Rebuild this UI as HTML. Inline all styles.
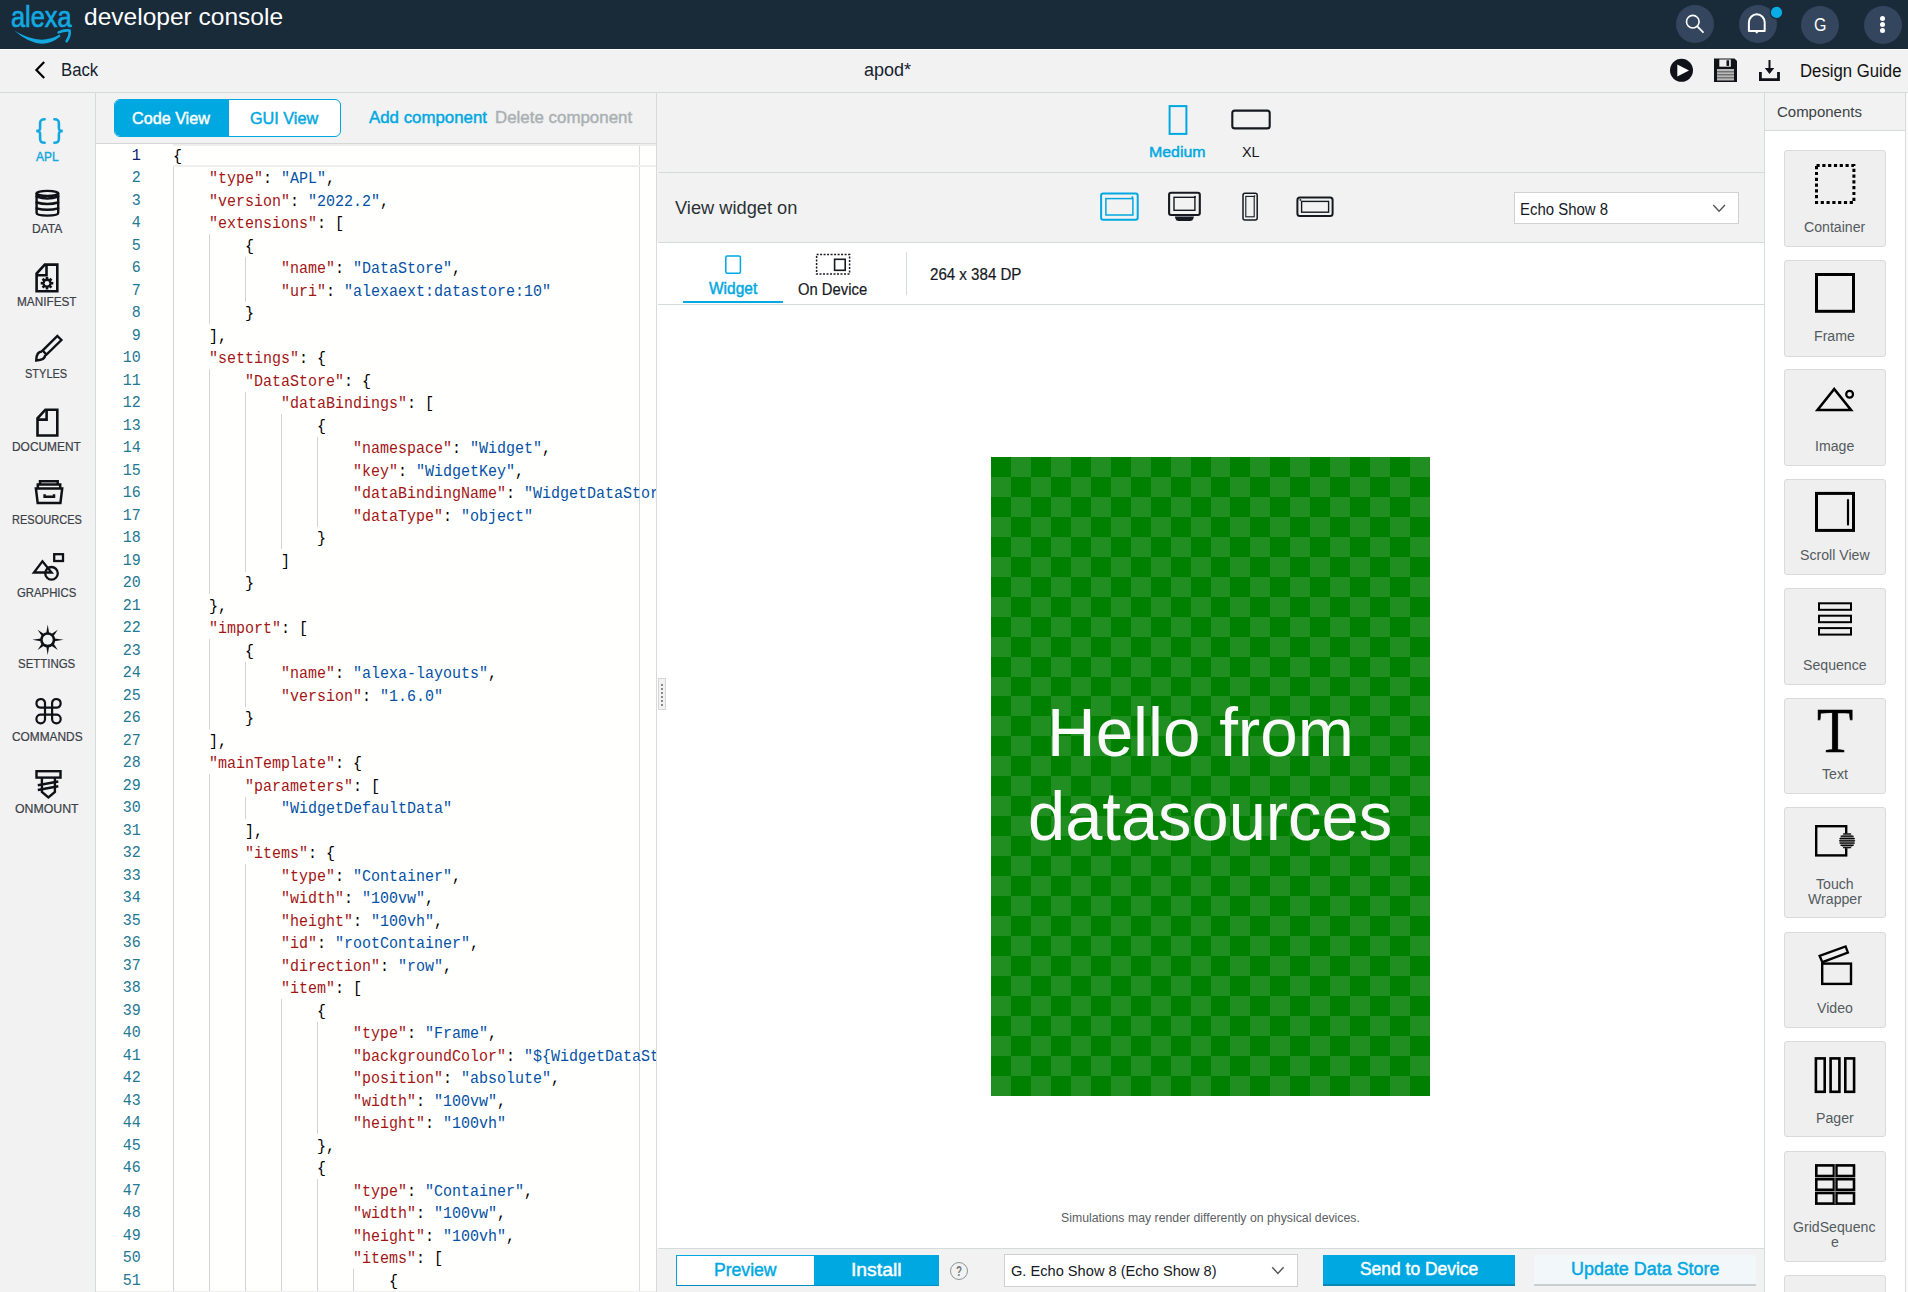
<!DOCTYPE html>
<html><head><meta charset="utf-8">
<style>
*{box-sizing:border-box;margin:0;padding:0}
html,body{width:1908px;height:1292px;overflow:hidden;background:#fff;font-family:"Liberation Sans",sans-serif;position:relative}
.a{position:absolute}
.t{position:absolute;white-space:pre;line-height:1}
svg{position:absolute;overflow:visible}
.ln{position:absolute;left:0;width:140px;text-align:right;font-family:"Liberation Mono",monospace;font-size:16.5px;transform:scaleX(0.909);transform-origin:100% 0;color:#237893;line-height:22.5px;height:22.5px}
.cl{position:absolute;left:173px;font-family:"Liberation Mono",monospace;font-size:16.5px;transform:scaleX(0.909);transform-origin:0 0;line-height:22.5px;height:22.5px;white-space:pre;color:#000}
.k{color:#a31515}.s{color:#0451a5}
.ig{position:absolute;width:1px;background:#d3d3d3}
.card{position:absolute;left:1784px;width:102px;background:#efefef;border:1px solid #dadada;border-radius:3px}
.cardl{position:absolute;left:1784px;width:102px;text-align:center;font-size:14.5px;color:#545b5e;line-height:1;white-space:pre}
</style></head><body>

<div class="a" style="left:0px;top:0px;width:1908px;height:49px;background:#192a39;"></div>
<div class="a" style="left:0px;top:49px;width:1908px;height:1px;background:#ffffff;"></div>
<div class="a" style="left:0px;top:50px;width:1908px;height:42px;background:#f2f2f2;"></div>
<div class="a" style="left:0px;top:92px;width:1908px;height:1px;background:#d5dbdb;"></div>
<div class="a" style="left:0px;top:93px;width:95px;height:1199px;background:#f2f2f2;"></div>
<div class="a" style="left:95px;top:93px;width:1px;height:1199px;background:#d5dbdb;"></div>
<div class="a" style="left:96px;top:93px;width:560px;height:50px;background:#f2f2f2;"></div>
<div class="a" style="left:96px;top:143px;width:560px;height:1px;background:#d6d6d6;"></div>
<div class="a" style="left:96px;top:144px;width:560px;height:1148px;background:#fffffe;"></div>
<div class="a" style="left:639px;top:144px;width:1px;height:1148px;background:#dcdcdc;"></div>
<div class="a" style="left:640px;top:143px;width:16px;height:2px;background:#dcdcdc;"></div>
<div class="a" style="left:656px;top:93px;width:1px;height:1199px;background:#d9d9d9;"></div>
<div class="a" style="left:657px;top:93px;width:1107px;height:79px;background:#f2f2f2;"></div>
<div class="a" style="left:658px;top:172px;width:1106px;height:1px;background:#d5dbdb;"></div>
<div class="a" style="left:657px;top:173px;width:1107px;height:69px;background:#f2f2f2;"></div>
<div class="a" style="left:658px;top:242px;width:1106px;height:1px;background:#d5dbdb;"></div>
<div class="a" style="left:657px;top:243px;width:1107px;height:61px;background:#ffffff;"></div>
<div class="a" style="left:658px;top:304px;width:1106px;height:1px;background:#d5dbdb;"></div>
<div class="a" style="left:657px;top:305px;width:1107px;height:943px;background:#ffffff;"></div>
<div class="a" style="left:658px;top:1248px;width:1106px;height:1px;background:#d5dbdb;"></div>
<div class="a" style="left:657px;top:1249px;width:1107px;height:43px;background:#f2f2f2;"></div>
<div class="a" style="left:1764px;top:93px;width:1px;height:1199px;background:#d5dbdb;"></div>
<div class="a" style="left:1765px;top:93px;width:140px;height:37px;background:#f2f2f2;"></div>
<div class="a" style="left:1765px;top:130px;width:140px;height:1px;background:#d5dbdb;"></div>
<div class="a" style="left:1765px;top:131px;width:140px;height:1161px;background:#ffffff;"></div>
<div class="a" style="left:1905px;top:93px;width:1px;height:1199px;background:#dadada;"></div>
<div class="a" style="left:1906px;top:93px;width:2px;height:1199px;background:#fafafa;"></div>
<div class="t" style="left:11.23px;top:2.11px;font-family:'Liberation Sans';font-size:29.52px;color:#13a8e0;transform:scaleX(0.8592);transform-origin:0 0;-webkit-text-stroke:0.7px #13a8e0;">alexa</div>
<svg style="left:0;top:0" width="100" height="49" viewBox="0 0 100 49">
<path d="M14.2 30.6 Q40 53.5 60.5 36.2 L59.6 34.6 Q40 46.5 14.2 30.6 Z" fill="#13a8e0"/>
<path d="M58.6 32.4 Q65 29.6 69.6 30.6 Q70.4 35.8 66.6 41.2" stroke="#13a8e0" stroke-width="2.6" fill="none" stroke-linecap="round" stroke-linejoin="round"/>
</svg>
<div class="t" style="left:84.48px;top:5.48px;font-family:'Liberation Sans';font-size:24.00px;color:#fff;transform:scaleX(1.0220);transform-origin:0 0;">developer console</div>
<div class="a" style="left:1676px;top:5px;width:38px;height:38px;border-radius:50%;background:#34465e"></div>
<div class="a" style="left:1738.5px;top:5px;width:38px;height:38px;border-radius:50%;background:#34465e"></div>
<div class="a" style="left:1801px;top:6.300000000000001px;width:38px;height:38px;border-radius:50%;background:#34465e"></div>
<div class="a" style="left:1863.5px;top:6.300000000000001px;width:38px;height:38px;border-radius:50%;background:#34465e"></div>
<svg style="left:1670px;top:0" width="40" height="48" viewBox="1670 0 40 48">
<circle cx="1692.8" cy="21.7" r="6.3" stroke="#fff" stroke-width="1.6" fill="none"/>
<line x1="1697.3" y1="26.4" x2="1703" y2="32.2" stroke="#fff" stroke-width="1.8" stroke-linecap="round"/>
</svg>
<svg style="left:1740px;top:0" width="50" height="48" viewBox="1740 0 50 48">
<path d="M1748.9 31 V22.5 A7.9 8.2 0 0 1 1764.7 22.5 V31 Z" stroke="#fff" stroke-width="2" fill="none" stroke-linejoin="round"/>
<path d="M1754.8 31.5 L1756.8 33.8 L1758.8 31.5 Z" fill="#fff"/>
<circle cx="1776.5" cy="12.4" r="6.8" fill="#192a39"/>
<circle cx="1776.5" cy="12.4" r="5.6" fill="#0aace6"/>
</svg>
<div class="t" style="left:1813.96px;top:15.89px;font-family:'Liberation Sans';font-size:18.91px;color:#fff;transform:scaleX(0.8485);transform-origin:0 0;">G</div>
<div class="a" style="left:1879.8px;top:15.8px;width:5.4px;height:5.4px;border-radius:50%;background:#fff"></div>
<div class="a" style="left:1879.8px;top:21.7px;width:5.4px;height:5.4px;border-radius:50%;background:#fff"></div>
<div class="a" style="left:1879.8px;top:27.6px;width:5.4px;height:5.4px;border-radius:50%;background:#fff"></div>
<svg style="left:30px;top:55px" width="20" height="30" viewBox="30 55 20 30">
<polyline points="44.2,62 36.4,70 44.2,78" stroke="#000" stroke-width="2.2" fill="none"/>
</svg>
<div class="t" style="left:61.35px;top:60.84px;font-family:'Liberation Sans';font-size:18.62px;color:#16232f;transform:scaleX(0.9003);transform-origin:0 0;">Back</div>
<div class="t" style="left:864.13px;top:62.45px;font-family:'Liberation Sans';font-size:17.66px;color:#16232f;transform:scaleX(1.0200);transform-origin:0 0;">apod*</div>
<svg style="left:1665px;top:55px" width="120" height="32" viewBox="1665 55 120 32">
<circle cx="1681.5" cy="70.3" r="11.5" fill="#11111a"/>
<path d="M1677.3 64.6 L1689 70.6 L1677.3 76.6 Z" fill="#fff"/>
<path d="M1714 58.5 H1734.5 L1737 61 V82 H1714 Z" fill="#11111a"/>
<rect x="1719.3" y="59.5" width="11.5" height="7.2" fill="#eee"/>
<rect x="1726.5" y="60.3" width="2.6" height="5.6" fill="#11111a"/>
<rect x="1717" y="69" width="17" height="11.5" fill="#b8b8b8"/>
<rect x="1717" y="71.3" width="17" height="1" fill="#555"/>
<rect x="1717" y="74.3" width="17" height="1" fill="#555"/>
<rect x="1717" y="77.3" width="17" height="1" fill="#555"/>
<path d="M1760.4 72 V79.7 H1778.5 V72" stroke="#11111a" stroke-width="2.8" fill="none"/>
<line x1="1769.5" y1="60" x2="1769.5" y2="70" stroke="#11111a" stroke-width="2"/>
<path d="M1764.8 68 H1774.3 L1769.5 74 Z" fill="#11111a"/>
</svg>
<div class="t" style="left:1799.74px;top:61.96px;font-family:'Liberation Sans';font-size:18.47px;color:#111;transform:scaleX(0.9075);transform-origin:0 0;">Design Guide</div>
<div class="t" style="left:35.80px;top:151.10px;font-family:'Liberation Sans';font-size:12.40px;color:#13a8e0;transform:scaleX(0.9652);transform-origin:0 0;-webkit-text-stroke:0.4px #13a8e0;">APL</div>
<div class="t" style="left:31.53px;top:222.90px;font-family:'Liberation Sans';font-size:12.40px;color:#3b4047;transform:scaleX(0.9726);transform-origin:0 0;-webkit-text-stroke:0.2px #3b4047;">DATA</div>
<div class="t" style="left:16.85px;top:296.20px;font-family:'Liberation Sans';font-size:12.40px;color:#3b4047;transform:scaleX(0.9502);transform-origin:0 0;-webkit-text-stroke:0.2px #3b4047;">MANIFEST</div>
<div class="t" style="left:25.44px;top:368.30px;font-family:'Liberation Sans';font-size:12.40px;color:#3b4047;transform:scaleX(0.8884);transform-origin:0 0;-webkit-text-stroke:0.2px #3b4047;">STYLES</div>
<div class="t" style="left:11.64px;top:441.30px;font-family:'Liberation Sans';font-size:12.40px;color:#3b4047;transform:scaleX(0.9623);transform-origin:0 0;-webkit-text-stroke:0.2px #3b4047;">DOCUMENT</div>
<div class="t" style="left:11.51px;top:513.50px;font-family:'Liberation Sans';font-size:12.40px;color:#3b4047;transform:scaleX(0.8898);transform-origin:0 0;-webkit-text-stroke:0.2px #3b4047;">RESOURCES</div>
<div class="t" style="left:17.23px;top:586.50px;font-family:'Liberation Sans';font-size:12.40px;color:#3b4047;transform:scaleX(0.9150);transform-origin:0 0;-webkit-text-stroke:0.2px #3b4047;">GRAPHICS</div>
<div class="t" style="left:18.12px;top:658.20px;font-family:'Liberation Sans';font-size:12.40px;color:#3b4047;transform:scaleX(0.9235);transform-origin:0 0;-webkit-text-stroke:0.2px #3b4047;">SETTINGS</div>
<div class="t" style="left:11.50px;top:731.20px;font-family:'Liberation Sans';font-size:12.40px;color:#3b4047;transform:scaleX(0.9589);transform-origin:0 0;-webkit-text-stroke:0.2px #3b4047;">COMMANDS</div>
<div class="t" style="left:15.08px;top:802.90px;font-family:'Liberation Sans';font-size:12.40px;color:#3b4047;transform:scaleX(0.9937);transform-origin:0 0;-webkit-text-stroke:0.2px #3b4047;">ONMOUNT</div>
<svg style="left:0;top:93px" width="95" height="720" viewBox="0 93 95 720">
<g fill="none" stroke="#13a8e0" stroke-width="2.6" stroke-linecap="round">
<path d="M44.6 119.3 C40.8 119.3 40.1 120.8 40.1 123.5 V128 C40.1 130.2 39.3 131 36.2 131 C39.3 131 40.1 131.8 40.1 134 V138.5 C40.1 141.2 40.8 142.7 44.6 142.7"/>
<path d="M54.4 119.3 C58.2 119.3 58.9 120.8 58.9 123.5 V128 C58.9 130.2 59.7 131 62.8 131 C59.7 131 58.9 131.8 58.9 134 V138.5 C58.9 141.2 58.2 142.7 54.4 142.7"/>
</g>
<g fill="none" stroke="#0f1116" stroke-width="2.4" stroke-linejoin="round" stroke-linecap="round">
<ellipse cx="47.4" cy="193.4" rx="10.8" ry="2.5"/>
<path d="M36.6 193.4 V213 Q36.6 215.6 47.4 215.6 Q58.2 215.6 58.2 213 V193.4"/>
<path d="M36.6 196.5 Q47.4 200.5 58.2 196.5"/>
<path d="M36.6 202.5 Q47.4 205.5 58.2 202.5"/>
<path d="M36.6 208.3 Q47.4 211.3 58.2 208.3"/>
</g>
<g fill="none" stroke="#0f1116" stroke-width="2.6" stroke-linejoin="miter">
<path d="M44.8 264.6 H57.3 V291.3 H36.6 V273.5 Z"/>
<path d="M46.5 265 V275.3 H36.8"/>
<path d="M37.3 337.5 Z"/>
</g>
<g fill="#0f1116">
<circle cx="47" cy="283.2" r="4.6"/>
<g transform="translate(47 283.2)">
<rect x="-1.3" y="-6.3" width="2.6" height="12.6"/>
<rect x="-1.3" y="-6.3" width="2.6" height="12.6" transform="rotate(45)"/>
<rect x="-1.3" y="-6.3" width="2.6" height="12.6" transform="rotate(90)"/>
<rect x="-1.3" y="-6.3" width="2.6" height="12.6" transform="rotate(135)"/>
</g>
</g>
<circle cx="47" cy="283.2" r="2.3" fill="#f2f2f2"/>
<g fill="none" stroke="#0f1116" stroke-width="2.4" stroke-linejoin="miter">
<path d="M57.4 336 L61.4 340 L46.5 354.6 L42.6 350.6 Z"/>
<path d="M42 351.5 C38.2 351.5 36.3 354.5 36.2 360.5 C42 360.3 45.2 358.3 45.2 354.8"/>
</g>
<g fill="none" stroke="#0f1116" stroke-width="2.6" stroke-linejoin="miter">
<path d="M45.4 409.7 H57.3 V435.5 H37.5 V418.3 Z"/>
<path d="M46.6 410 V419.6 H37.5"/>
</g>
<g fill="none" stroke="#0f1116" stroke-width="2.5" stroke-linejoin="miter">
<path d="M35.9 488.6 H62.2 L60.4 503.1 H37.7 Z"/>
<path d="M37.8 488 V484.6 H60.2 V488"/>
<path d="M40 484 V481.3 H57.7 V484"/>
<path d="M44.6 494.3 V496.7 H54 V494.3"/>
</g>
<g fill="none" stroke="#0f1116" stroke-width="2.3" stroke-linejoin="miter">
<path d="M42.4 561.3 L51.6 572.5 H33.9 Z"/>
<circle cx="51.5" cy="573.3" r="6.3"/>
<rect x="54.2" y="554.2" width="8.8" height="6.8"/>
</g>
<g fill="#0f1116">
<circle cx="47.7" cy="639.8" r="7.6"/>
<path d="M46.3 633 L47.7 624.6 L49.1 633 Z"/>
<path d="M46.3 646.6 L47.7 655 L49.1 646.6 Z"/>
<path d="M40.9 638.4 L32.3 639.8 L40.9 641.2 Z"/>
<path d="M54.5 638.4 L63.6 639.8 L54.5 641.2 Z"/>
<g transform="rotate(45 47.7 639.8)">
<path d="M46.2 633 L47.7 625.5 L49.2 633 Z"/>
<path d="M46.2 646.6 L47.7 654.1 L49.2 646.6 Z"/>
<path d="M40.9 638.3 L33.4 639.8 L40.9 641.3 Z"/>
<path d="M54.5 638.3 L62 639.8 L54.5 641.3 Z"/>
</g>
</g>
<circle cx="47.7" cy="639.8" r="5.0" fill="#f2f2f2"/>
<g fill="none" stroke="#0f1116" stroke-width="2.2">
<path d="M45 707.6 H52.1 V714.7 H45 Z"/>
<path d="M45 707.6 V702.6 A4.3 4.3 0 1 0 40.3 707.6 H45"/>
<path d="M52.1 707.6 V702.6 A4.3 4.3 0 1 1 56.8 707.6 H52.1"/>
<path d="M45 714.7 V719.2 A4.3 4.3 0 1 1 40.3 714.7 H45"/>
<path d="M52.1 714.7 V719.2 A4.3 4.3 0 1 0 56.8 714.7 H52.1"/>
</g>
<g fill="none" stroke="#0f1116" stroke-width="2.4" stroke-linejoin="miter">
<rect x="36.5" y="771.2" width="24" height="6.4"/>
<path d="M41.9 778 V792 L48.4 797.5 L54.9 792 V778"/>
<path d="M37.8 785.3 L58.3 781.5"/>
<path d="M37.8 790 L58.3 786.3"/>
</g>
</svg>
<div class="a" style="left:113.7px;top:98.8px;width:227.3px;height:38.2px;border:1px solid #00a8e1;border-radius:6px;background:#fff;overflow:hidden"><div class="a" style="left:0;top:0;width:114.3px;height:38px;background:#00a8e1"></div></div>
<div class="t" style="left:131.95px;top:110.65px;font-family:'Liberation Sans';font-size:16.60px;color:#fff;-webkit-text-stroke:0.45px #fff;transform:scaleX(0.9741);transform-origin:0 0;">Code View</div>
<div class="t" style="left:249.85px;top:110.65px;font-family:'Liberation Sans';font-size:16.60px;color:#00a8e1;-webkit-text-stroke:0.45px #00a8e1;transform:scaleX(0.9768);transform-origin:0 0;">GUI View</div>
<div class="t" style="left:368.70px;top:108.95px;font-family:'Liberation Sans';font-size:17.31px;color:#00a8e1;-webkit-text-stroke:0.45px #00a8e1;transform:scaleX(0.9733);transform-origin:0 0;">Add component</div>
<div class="t" style="left:495.46px;top:108.95px;font-family:'Liberation Sans';font-size:17.31px;color:#aab0b2;-webkit-text-stroke:0.45px #aab0b2;transform:scaleX(0.9769);transform-origin:0 0;">Delete component</div>
<div class="a" style="left:96px;top:144px;width:560px;height:1148px;overflow:hidden">
<div class="a" style="left:77px;top:0px;width:483px;height:22.5px;border-top:2px solid #eeeeee;border-bottom:2px solid #eeeeee"></div>
<div class="ig" style="left:77px;top:22.50px;height:1125.00px"></div>
<div class="ig" style="left:113px;top:90.00px;height:90.00px"></div>
<div class="ig" style="left:113px;top:225.00px;height:225.00px"></div>
<div class="ig" style="left:113px;top:495.00px;height:90.00px"></div>
<div class="ig" style="left:113px;top:630.00px;height:517.50px"></div>
<div class="ig" style="left:149px;top:112.50px;height:45.00px"></div>
<div class="ig" style="left:149px;top:247.50px;height:180.00px"></div>
<div class="ig" style="left:149px;top:517.50px;height:45.00px"></div>
<div class="ig" style="left:149px;top:652.50px;height:22.50px"></div>
<div class="ig" style="left:149px;top:720.00px;height:427.50px"></div>
<div class="ig" style="left:185px;top:270.00px;height:135.00px"></div>
<div class="ig" style="left:185px;top:855.00px;height:292.50px"></div>
<div class="ig" style="left:221px;top:292.50px;height:90.00px"></div>
<div class="ig" style="left:221px;top:877.50px;height:112.50px"></div>
<div class="ig" style="left:221px;top:1035.00px;height:112.50px"></div>
<div class="ig" style="left:257px;top:1125.00px;height:22.50px"></div>
<div class="ln" style="left:0;width:44.8px;top:0.75px;color:#0b216f">1</div>
<div class="cl" style="left:77px;top:1.60px">{</div>
<div class="ln" style="left:0;width:44.8px;top:23.25px;color:#237893">2</div>
<div class="cl" style="left:77px;top:24.10px">    <span class="k">"type"</span>: <span class="s">"APL"</span>,</div>
<div class="ln" style="left:0;width:44.8px;top:45.75px;color:#237893">3</div>
<div class="cl" style="left:77px;top:46.60px">    <span class="k">"version"</span>: <span class="s">"2022.2"</span>,</div>
<div class="ln" style="left:0;width:44.8px;top:68.25px;color:#237893">4</div>
<div class="cl" style="left:77px;top:69.10px">    <span class="k">"extensions"</span>: [</div>
<div class="ln" style="left:0;width:44.8px;top:90.75px;color:#237893">5</div>
<div class="cl" style="left:77px;top:91.60px">        {</div>
<div class="ln" style="left:0;width:44.8px;top:113.25px;color:#237893">6</div>
<div class="cl" style="left:77px;top:114.10px">            <span class="k">"name"</span>: <span class="s">"DataStore"</span>,</div>
<div class="ln" style="left:0;width:44.8px;top:135.75px;color:#237893">7</div>
<div class="cl" style="left:77px;top:136.60px">            <span class="k">"uri"</span>: <span class="s">"alexaext:datastore:10"</span></div>
<div class="ln" style="left:0;width:44.8px;top:158.25px;color:#237893">8</div>
<div class="cl" style="left:77px;top:159.10px">        }</div>
<div class="ln" style="left:0;width:44.8px;top:180.75px;color:#237893">9</div>
<div class="cl" style="left:77px;top:181.60px">    ],</div>
<div class="ln" style="left:0;width:44.8px;top:203.25px;color:#237893">10</div>
<div class="cl" style="left:77px;top:204.10px">    <span class="k">"settings"</span>: {</div>
<div class="ln" style="left:0;width:44.8px;top:225.75px;color:#237893">11</div>
<div class="cl" style="left:77px;top:226.60px">        <span class="k">"DataStore"</span>: {</div>
<div class="ln" style="left:0;width:44.8px;top:248.25px;color:#237893">12</div>
<div class="cl" style="left:77px;top:249.10px">            <span class="k">"dataBindings"</span>: [</div>
<div class="ln" style="left:0;width:44.8px;top:270.75px;color:#237893">13</div>
<div class="cl" style="left:77px;top:271.60px">                {</div>
<div class="ln" style="left:0;width:44.8px;top:293.25px;color:#237893">14</div>
<div class="cl" style="left:77px;top:294.10px">                    <span class="k">"namespace"</span>: <span class="s">"Widget"</span>,</div>
<div class="ln" style="left:0;width:44.8px;top:315.75px;color:#237893">15</div>
<div class="cl" style="left:77px;top:316.60px">                    <span class="k">"key"</span>: <span class="s">"WidgetKey"</span>,</div>
<div class="ln" style="left:0;width:44.8px;top:338.25px;color:#237893">16</div>
<div class="cl" style="left:77px;top:339.10px">                    <span class="k">"dataBindingName"</span>: <span class="s">"WidgetDataStore"</span>,</div>
<div class="ln" style="left:0;width:44.8px;top:360.75px;color:#237893">17</div>
<div class="cl" style="left:77px;top:361.60px">                    <span class="k">"dataType"</span>: <span class="s">"object"</span></div>
<div class="ln" style="left:0;width:44.8px;top:383.25px;color:#237893">18</div>
<div class="cl" style="left:77px;top:384.10px">                }</div>
<div class="ln" style="left:0;width:44.8px;top:405.75px;color:#237893">19</div>
<div class="cl" style="left:77px;top:406.60px">            ]</div>
<div class="ln" style="left:0;width:44.8px;top:428.25px;color:#237893">20</div>
<div class="cl" style="left:77px;top:429.10px">        }</div>
<div class="ln" style="left:0;width:44.8px;top:450.75px;color:#237893">21</div>
<div class="cl" style="left:77px;top:451.60px">    },</div>
<div class="ln" style="left:0;width:44.8px;top:473.25px;color:#237893">22</div>
<div class="cl" style="left:77px;top:474.10px">    <span class="k">"import"</span>: [</div>
<div class="ln" style="left:0;width:44.8px;top:495.75px;color:#237893">23</div>
<div class="cl" style="left:77px;top:496.60px">        {</div>
<div class="ln" style="left:0;width:44.8px;top:518.25px;color:#237893">24</div>
<div class="cl" style="left:77px;top:519.10px">            <span class="k">"name"</span>: <span class="s">"alexa-layouts"</span>,</div>
<div class="ln" style="left:0;width:44.8px;top:540.75px;color:#237893">25</div>
<div class="cl" style="left:77px;top:541.60px">            <span class="k">"version"</span>: <span class="s">"1.6.0"</span></div>
<div class="ln" style="left:0;width:44.8px;top:563.25px;color:#237893">26</div>
<div class="cl" style="left:77px;top:564.10px">        }</div>
<div class="ln" style="left:0;width:44.8px;top:585.75px;color:#237893">27</div>
<div class="cl" style="left:77px;top:586.60px">    ],</div>
<div class="ln" style="left:0;width:44.8px;top:608.25px;color:#237893">28</div>
<div class="cl" style="left:77px;top:609.10px">    <span class="k">"mainTemplate"</span>: {</div>
<div class="ln" style="left:0;width:44.8px;top:630.75px;color:#237893">29</div>
<div class="cl" style="left:77px;top:631.60px">        <span class="k">"parameters"</span>: [</div>
<div class="ln" style="left:0;width:44.8px;top:653.25px;color:#237893">30</div>
<div class="cl" style="left:77px;top:654.10px">            <span class="s">"WidgetDefaultData"</span></div>
<div class="ln" style="left:0;width:44.8px;top:675.75px;color:#237893">31</div>
<div class="cl" style="left:77px;top:676.60px">        ],</div>
<div class="ln" style="left:0;width:44.8px;top:698.25px;color:#237893">32</div>
<div class="cl" style="left:77px;top:699.10px">        <span class="k">"items"</span>: {</div>
<div class="ln" style="left:0;width:44.8px;top:720.75px;color:#237893">33</div>
<div class="cl" style="left:77px;top:721.60px">            <span class="k">"type"</span>: <span class="s">"Container"</span>,</div>
<div class="ln" style="left:0;width:44.8px;top:743.25px;color:#237893">34</div>
<div class="cl" style="left:77px;top:744.10px">            <span class="k">"width"</span>: <span class="s">"100vw"</span>,</div>
<div class="ln" style="left:0;width:44.8px;top:765.75px;color:#237893">35</div>
<div class="cl" style="left:77px;top:766.60px">            <span class="k">"height"</span>: <span class="s">"100vh"</span>,</div>
<div class="ln" style="left:0;width:44.8px;top:788.25px;color:#237893">36</div>
<div class="cl" style="left:77px;top:789.10px">            <span class="k">"id"</span>: <span class="s">"rootContainer"</span>,</div>
<div class="ln" style="left:0;width:44.8px;top:810.75px;color:#237893">37</div>
<div class="cl" style="left:77px;top:811.60px">            <span class="k">"direction"</span>: <span class="s">"row"</span>,</div>
<div class="ln" style="left:0;width:44.8px;top:833.25px;color:#237893">38</div>
<div class="cl" style="left:77px;top:834.10px">            <span class="k">"item"</span>: [</div>
<div class="ln" style="left:0;width:44.8px;top:855.75px;color:#237893">39</div>
<div class="cl" style="left:77px;top:856.60px">                {</div>
<div class="ln" style="left:0;width:44.8px;top:878.25px;color:#237893">40</div>
<div class="cl" style="left:77px;top:879.10px">                    <span class="k">"type"</span>: <span class="s">"Frame"</span>,</div>
<div class="ln" style="left:0;width:44.8px;top:900.75px;color:#237893">41</div>
<div class="cl" style="left:77px;top:901.60px">                    <span class="k">"backgroundColor"</span>: <span class="s">"${WidgetDataStore.bgColor}"</span>,</div>
<div class="ln" style="left:0;width:44.8px;top:923.25px;color:#237893">42</div>
<div class="cl" style="left:77px;top:924.10px">                    <span class="k">"position"</span>: <span class="s">"absolute"</span>,</div>
<div class="ln" style="left:0;width:44.8px;top:945.75px;color:#237893">43</div>
<div class="cl" style="left:77px;top:946.60px">                    <span class="k">"width"</span>: <span class="s">"100vw"</span>,</div>
<div class="ln" style="left:0;width:44.8px;top:968.25px;color:#237893">44</div>
<div class="cl" style="left:77px;top:969.10px">                    <span class="k">"height"</span>: <span class="s">"100vh"</span></div>
<div class="ln" style="left:0;width:44.8px;top:990.75px;color:#237893">45</div>
<div class="cl" style="left:77px;top:991.60px">                },</div>
<div class="ln" style="left:0;width:44.8px;top:1013.25px;color:#237893">46</div>
<div class="cl" style="left:77px;top:1014.10px">                {</div>
<div class="ln" style="left:0;width:44.8px;top:1035.75px;color:#237893">47</div>
<div class="cl" style="left:77px;top:1036.60px">                    <span class="k">"type"</span>: <span class="s">"Container"</span>,</div>
<div class="ln" style="left:0;width:44.8px;top:1058.25px;color:#237893">48</div>
<div class="cl" style="left:77px;top:1059.10px">                    <span class="k">"width"</span>: <span class="s">"100vw"</span>,</div>
<div class="ln" style="left:0;width:44.8px;top:1080.75px;color:#237893">49</div>
<div class="cl" style="left:77px;top:1081.60px">                    <span class="k">"height"</span>: <span class="s">"100vh"</span>,</div>
<div class="ln" style="left:0;width:44.8px;top:1103.25px;color:#237893">50</div>
<div class="cl" style="left:77px;top:1104.10px">                    <span class="k">"items"</span>: [</div>
<div class="ln" style="left:0;width:44.8px;top:1125.75px;color:#237893">51</div>
<div class="cl" style="left:77px;top:1126.60px">                        {</div>
<div class="a" style="left:0;top:1147px;width:560px;height:1px;background:#eeeeee"></div>
</div>
<div class="a" style="left:658px;top:678px;width:8px;height:32px;background:#f2f2f2;border:1px solid #d6d6d6"></div>
<div class="a" style="left:661px;top:683.5px;width:2px;height:2px;background:#888"></div>
<div class="a" style="left:661px;top:687.5px;width:2px;height:2px;background:#888"></div>
<div class="a" style="left:661px;top:691.5px;width:2px;height:2px;background:#888"></div>
<div class="a" style="left:661px;top:695.5px;width:2px;height:2px;background:#888"></div>
<div class="a" style="left:661px;top:699.5px;width:2px;height:2px;background:#888"></div>
<div class="a" style="left:661px;top:703.5px;width:2px;height:2px;background:#888"></div>
<svg style="left:1090px;top:95px" width="260" height="140" viewBox="1090 95 260 140">
<rect x="1169.6" y="106.1" width="16.8" height="27.8" fill="none" stroke="#00a8e1" stroke-width="2"/>
<rect x="1232.3" y="110.6" width="37.4" height="17.8" rx="2.5" fill="none" stroke="#16191f" stroke-width="2.1"/>
<rect x="1101.1" y="193.6" width="36.6" height="26.2" rx="2" fill="none" stroke="#00a8e1" stroke-width="2"/>
<rect x="1105.9" y="198.6" width="27" height="16.4" fill="none" stroke="#00a8e1" stroke-width="1.5"/>
<circle cx="1132.4" cy="197.2" r="1" fill="#00a8e1"/>
<rect x="1169.1" y="192.8" width="30.7" height="22.2" rx="2" fill="none" stroke="#16191f" stroke-width="2.1"/>
<rect x="1174" y="197.3" width="20.9" height="13" fill="none" stroke="#16191f" stroke-width="1.4"/>
<path d="M1174.8 216.6 H1194 L1193.2 219 Q1192.6 221 1190 221 H1178.6 Q1176 221 1175.6 219 Z" fill="#16191f"/>
<circle cx="1195" cy="196.8" r="1" fill="#16191f"/>
<rect x="1243" y="193.3" width="14.2" height="26.6" rx="2" fill="none" stroke="#16191f" stroke-width="1.5"/>
<rect x="1245.8" y="196.4" width="8.4" height="20.4" fill="none" stroke="#16191f" stroke-width="1.1"/>
<circle cx="1254.6" cy="196" r="0.8" fill="#16191f"/>
<rect x="1297.4" y="197.5" width="35.2" height="18.5" rx="2.5" fill="none" stroke="#16191f" stroke-width="2"/>
<rect x="1301.6" y="201.4" width="27" height="10.8" fill="none" stroke="#16191f" stroke-width="1.4"/>
<circle cx="1300.4" cy="199.9" r="0.9" fill="#16191f"/>
</svg>
<div class="t" style="left:1149.49px;top:144.19px;font-family:'Liberation Sans';font-size:15.13px;color:#00a8e1;-webkit-text-stroke:0.45px #00a8e1;transform:scaleX(1.0518);transform-origin:0 0;">Medium</div>
<div class="t" style="left:1241.94px;top:144.09px;font-family:'Liberation Sans';font-size:15.13px;color:#16191f;transform:scaleX(0.9532);transform-origin:0 0;">XL</div>
<div class="t" style="left:674.98px;top:198.94px;font-family:'Liberation Sans';font-size:18.62px;color:#2b3136;transform:scaleX(0.9804);transform-origin:0 0;">View widget on</div>
<div class="a" style="left:1514px;top:192px;width:225px;height:32px;background:#fff;border:1px solid #d0d0d0"></div>
<div class="t" style="left:1519.90px;top:200.67px;font-family:'Liberation Sans';font-size:17.16px;color:#16191f;transform:scaleX(0.8709);transform-origin:0 0;">Echo Show 8</div>
<svg style="left:1705px;top:198px" width="30" height="20" viewBox="1705 198 30 20"><polyline points="1713.2,205 1719.1,211.2 1725,205" fill="none" stroke="#555" stroke-width="1.4"/></svg>
<svg style="left:700px;top:245px" width="200" height="60" viewBox="700 245 200 60">
<rect x="725.8" y="255.9" width="14.6" height="17.3" rx="1.5" fill="none" stroke="#00a8e1" stroke-width="1.5"/>
<rect x="816.6" y="254.6" width="33" height="19.4" fill="none" stroke="#16191f" stroke-width="1.5" stroke-dasharray="2 1.5"/>
<rect x="834.6" y="259.3" width="10.6" height="11" fill="none" stroke="#16191f" stroke-width="1.6"/>
</svg>
<div class="t" style="left:708.68px;top:281.38px;font-family:'Liberation Sans';font-size:15.85px;color:#00a8e1;-webkit-text-stroke:0.45px #00a8e1;transform:scaleX(0.9771);transform-origin:0 0;">Widget</div>
<div class="t" style="left:797.99px;top:281.60px;font-family:'Liberation Sans';font-size:15.60px;color:#16191f;transform:scaleX(0.9497);transform-origin:0 0;-webkit-text-stroke:0.2px #16191f;">On Device</div>
<div class="a" style="left:683px;top:300.5px;width:100px;height:2.6px;background:#00a8e1"></div>
<div class="a" style="left:906px;top:252px;width:1px;height:43px;background:#d5dbdb"></div>
<div class="t" style="left:929.89px;top:267.38px;font-family:'Liberation Sans';font-size:15.85px;color:#16191f;transform:scaleX(0.9522);transform-origin:0 0;-webkit-text-stroke:0.2px #16191f;">264 x 384 DP</div>
<div class="t" style="left:1061.24px;top:1211.09px;font-family:'Liberation Sans';font-size:13.60px;color:#5a6064;transform:scaleX(0.9038);transform-origin:0 0;">Simulations may render differently on physical devices.</div>
<div class="a" style="left:676px;top:1255px;width:263px;height:31px;background:#fff;border:1px solid #00a8e1;border-bottom-color:#0090c0"></div>
<div class="a" style="left:814px;top:1255px;width:125px;height:31px;background:#00a8e1;border-bottom:1px solid #0090c0"></div>
<div class="t" style="left:713.86px;top:1261.19px;font-family:'Liberation Sans';font-size:18.33px;color:#00a8e1;-webkit-text-stroke:0.45px #00a8e1;transform:scaleX(0.9597);transform-origin:0 0;">Preview</div>
<div class="t" style="left:851.49px;top:1261.19px;font-family:'Liberation Sans';font-size:18.33px;color:#fff;-webkit-text-stroke:0.45px #fff;transform:scaleX(1.0548);transform-origin:0 0;">Install</div>
<div class="a" style="left:950px;top:1261.5px;width:18px;height:18px;border-radius:50%;border:1.2px solid #8c9698"></div>
<div class="t" style="left:956.16px;top:1264.03px;font-family:'Liberation Sans';font-size:14.03px;color:#6f7b7d;font-weight:bold;transform:scaleX(0.7018);transform-origin:0 0;">?</div>
<div class="a" style="left:1004px;top:1254px;width:294px;height:33px;background:#fff;border:1px solid #d0d0d0"></div>
<div class="t" style="left:1010.86px;top:1264.20px;font-family:'Liberation Sans';font-size:14.88px;color:#16191f;transform:scaleX(0.9827);transform-origin:0 0;">G. Echo Show 8 (Echo Show 8)</div>
<svg style="left:1265px;top:1260px" width="30" height="20" viewBox="1265 1260 30 20"><polyline points="1272.2,1267.2 1277.9,1273.4 1283.6,1267.2" fill="none" stroke="#555" stroke-width="1.4"/></svg>
<div class="a" style="left:1323px;top:1255px;width:192px;height:30.5px;background:#00a8e1;border-bottom:2px solid #0a86b3"></div>
<div class="t" style="left:1359.75px;top:1260.66px;font-family:'Liberation Sans';font-size:17.89px;color:#fff;-webkit-text-stroke:0.45px #fff;transform:scaleX(0.9749);transform-origin:0 0;">Send to Device</div>
<div class="a" style="left:1534px;top:1255px;width:222px;height:30.5px;background:#f2f7f9;border-bottom:2px solid #c9cfd1"></div>
<div class="t" style="left:1570.94px;top:1260.41px;font-family:'Liberation Sans';font-size:18.18px;color:#00a8e1;-webkit-text-stroke:0.45px #00a8e1;transform:scaleX(0.9866);transform-origin:0 0;">Update Data Store</div>
<svg style="left:991px;top:457px" width="439" height="639" viewBox="0 0 439 639" shape-rendering="crispEdges"><rect width="439" height="639" fill="#008000"/><path fill="#218e21" d="M19.95 0.00h19.95v19.95h-19.95zM59.86 0.00h19.95v19.95h-19.95zM99.77 0.00h19.95v19.95h-19.95zM139.68 0.00h19.95v19.95h-19.95zM179.59 0.00h19.95v19.95h-19.95zM219.50 0.00h19.95v19.95h-19.95zM259.41 0.00h19.95v19.95h-19.95zM299.32 0.00h19.95v19.95h-19.95zM339.23 0.00h19.95v19.95h-19.95zM379.14 0.00h19.95v19.95h-19.95zM419.05 0.00h19.95v19.95h-19.95zM0.00 19.95h19.95v19.95h-19.95zM39.91 19.95h19.95v19.95h-19.95zM79.82 19.95h19.95v19.95h-19.95zM119.73 19.95h19.95v19.95h-19.95zM159.64 19.95h19.95v19.95h-19.95zM199.55 19.95h19.95v19.95h-19.95zM239.45 19.95h19.95v19.95h-19.95zM279.36 19.95h19.95v19.95h-19.95zM319.27 19.95h19.95v19.95h-19.95zM359.18 19.95h19.95v19.95h-19.95zM399.09 19.95h19.95v19.95h-19.95zM19.95 39.91h19.95v19.95h-19.95zM59.86 39.91h19.95v19.95h-19.95zM99.77 39.91h19.95v19.95h-19.95zM139.68 39.91h19.95v19.95h-19.95zM179.59 39.91h19.95v19.95h-19.95zM219.50 39.91h19.95v19.95h-19.95zM259.41 39.91h19.95v19.95h-19.95zM299.32 39.91h19.95v19.95h-19.95zM339.23 39.91h19.95v19.95h-19.95zM379.14 39.91h19.95v19.95h-19.95zM419.05 39.91h19.95v19.95h-19.95zM0.00 59.86h19.95v19.95h-19.95zM39.91 59.86h19.95v19.95h-19.95zM79.82 59.86h19.95v19.95h-19.95zM119.73 59.86h19.95v19.95h-19.95zM159.64 59.86h19.95v19.95h-19.95zM199.55 59.86h19.95v19.95h-19.95zM239.45 59.86h19.95v19.95h-19.95zM279.36 59.86h19.95v19.95h-19.95zM319.27 59.86h19.95v19.95h-19.95zM359.18 59.86h19.95v19.95h-19.95zM399.09 59.86h19.95v19.95h-19.95zM19.95 79.82h19.95v19.95h-19.95zM59.86 79.82h19.95v19.95h-19.95zM99.77 79.82h19.95v19.95h-19.95zM139.68 79.82h19.95v19.95h-19.95zM179.59 79.82h19.95v19.95h-19.95zM219.50 79.82h19.95v19.95h-19.95zM259.41 79.82h19.95v19.95h-19.95zM299.32 79.82h19.95v19.95h-19.95zM339.23 79.82h19.95v19.95h-19.95zM379.14 79.82h19.95v19.95h-19.95zM419.05 79.82h19.95v19.95h-19.95zM0.00 99.77h19.95v19.95h-19.95zM39.91 99.77h19.95v19.95h-19.95zM79.82 99.77h19.95v19.95h-19.95zM119.73 99.77h19.95v19.95h-19.95zM159.64 99.77h19.95v19.95h-19.95zM199.55 99.77h19.95v19.95h-19.95zM239.45 99.77h19.95v19.95h-19.95zM279.36 99.77h19.95v19.95h-19.95zM319.27 99.77h19.95v19.95h-19.95zM359.18 99.77h19.95v19.95h-19.95zM399.09 99.77h19.95v19.95h-19.95zM19.95 119.73h19.95v19.95h-19.95zM59.86 119.73h19.95v19.95h-19.95zM99.77 119.73h19.95v19.95h-19.95zM139.68 119.73h19.95v19.95h-19.95zM179.59 119.73h19.95v19.95h-19.95zM219.50 119.73h19.95v19.95h-19.95zM259.41 119.73h19.95v19.95h-19.95zM299.32 119.73h19.95v19.95h-19.95zM339.23 119.73h19.95v19.95h-19.95zM379.14 119.73h19.95v19.95h-19.95zM419.05 119.73h19.95v19.95h-19.95zM0.00 139.68h19.95v19.95h-19.95zM39.91 139.68h19.95v19.95h-19.95zM79.82 139.68h19.95v19.95h-19.95zM119.73 139.68h19.95v19.95h-19.95zM159.64 139.68h19.95v19.95h-19.95zM199.55 139.68h19.95v19.95h-19.95zM239.45 139.68h19.95v19.95h-19.95zM279.36 139.68h19.95v19.95h-19.95zM319.27 139.68h19.95v19.95h-19.95zM359.18 139.68h19.95v19.95h-19.95zM399.09 139.68h19.95v19.95h-19.95zM19.95 159.64h19.95v19.95h-19.95zM59.86 159.64h19.95v19.95h-19.95zM99.77 159.64h19.95v19.95h-19.95zM139.68 159.64h19.95v19.95h-19.95zM179.59 159.64h19.95v19.95h-19.95zM219.50 159.64h19.95v19.95h-19.95zM259.41 159.64h19.95v19.95h-19.95zM299.32 159.64h19.95v19.95h-19.95zM339.23 159.64h19.95v19.95h-19.95zM379.14 159.64h19.95v19.95h-19.95zM419.05 159.64h19.95v19.95h-19.95zM0.00 179.59h19.95v19.95h-19.95zM39.91 179.59h19.95v19.95h-19.95zM79.82 179.59h19.95v19.95h-19.95zM119.73 179.59h19.95v19.95h-19.95zM159.64 179.59h19.95v19.95h-19.95zM199.55 179.59h19.95v19.95h-19.95zM239.45 179.59h19.95v19.95h-19.95zM279.36 179.59h19.95v19.95h-19.95zM319.27 179.59h19.95v19.95h-19.95zM359.18 179.59h19.95v19.95h-19.95zM399.09 179.59h19.95v19.95h-19.95zM19.95 199.55h19.95v19.95h-19.95zM59.86 199.55h19.95v19.95h-19.95zM99.77 199.55h19.95v19.95h-19.95zM139.68 199.55h19.95v19.95h-19.95zM179.59 199.55h19.95v19.95h-19.95zM219.50 199.55h19.95v19.95h-19.95zM259.41 199.55h19.95v19.95h-19.95zM299.32 199.55h19.95v19.95h-19.95zM339.23 199.55h19.95v19.95h-19.95zM379.14 199.55h19.95v19.95h-19.95zM419.05 199.55h19.95v19.95h-19.95zM0.00 219.50h19.95v19.95h-19.95zM39.91 219.50h19.95v19.95h-19.95zM79.82 219.50h19.95v19.95h-19.95zM119.73 219.50h19.95v19.95h-19.95zM159.64 219.50h19.95v19.95h-19.95zM199.55 219.50h19.95v19.95h-19.95zM239.45 219.50h19.95v19.95h-19.95zM279.36 219.50h19.95v19.95h-19.95zM319.27 219.50h19.95v19.95h-19.95zM359.18 219.50h19.95v19.95h-19.95zM399.09 219.50h19.95v19.95h-19.95zM19.95 239.45h19.95v19.95h-19.95zM59.86 239.45h19.95v19.95h-19.95zM99.77 239.45h19.95v19.95h-19.95zM139.68 239.45h19.95v19.95h-19.95zM179.59 239.45h19.95v19.95h-19.95zM219.50 239.45h19.95v19.95h-19.95zM259.41 239.45h19.95v19.95h-19.95zM299.32 239.45h19.95v19.95h-19.95zM339.23 239.45h19.95v19.95h-19.95zM379.14 239.45h19.95v19.95h-19.95zM419.05 239.45h19.95v19.95h-19.95zM0.00 259.41h19.95v19.95h-19.95zM39.91 259.41h19.95v19.95h-19.95zM79.82 259.41h19.95v19.95h-19.95zM119.73 259.41h19.95v19.95h-19.95zM159.64 259.41h19.95v19.95h-19.95zM199.55 259.41h19.95v19.95h-19.95zM239.45 259.41h19.95v19.95h-19.95zM279.36 259.41h19.95v19.95h-19.95zM319.27 259.41h19.95v19.95h-19.95zM359.18 259.41h19.95v19.95h-19.95zM399.09 259.41h19.95v19.95h-19.95zM19.95 279.36h19.95v19.95h-19.95zM59.86 279.36h19.95v19.95h-19.95zM99.77 279.36h19.95v19.95h-19.95zM139.68 279.36h19.95v19.95h-19.95zM179.59 279.36h19.95v19.95h-19.95zM219.50 279.36h19.95v19.95h-19.95zM259.41 279.36h19.95v19.95h-19.95zM299.32 279.36h19.95v19.95h-19.95zM339.23 279.36h19.95v19.95h-19.95zM379.14 279.36h19.95v19.95h-19.95zM419.05 279.36h19.95v19.95h-19.95zM0.00 299.32h19.95v19.95h-19.95zM39.91 299.32h19.95v19.95h-19.95zM79.82 299.32h19.95v19.95h-19.95zM119.73 299.32h19.95v19.95h-19.95zM159.64 299.32h19.95v19.95h-19.95zM199.55 299.32h19.95v19.95h-19.95zM239.45 299.32h19.95v19.95h-19.95zM279.36 299.32h19.95v19.95h-19.95zM319.27 299.32h19.95v19.95h-19.95zM359.18 299.32h19.95v19.95h-19.95zM399.09 299.32h19.95v19.95h-19.95zM19.95 319.27h19.95v19.95h-19.95zM59.86 319.27h19.95v19.95h-19.95zM99.77 319.27h19.95v19.95h-19.95zM139.68 319.27h19.95v19.95h-19.95zM179.59 319.27h19.95v19.95h-19.95zM219.50 319.27h19.95v19.95h-19.95zM259.41 319.27h19.95v19.95h-19.95zM299.32 319.27h19.95v19.95h-19.95zM339.23 319.27h19.95v19.95h-19.95zM379.14 319.27h19.95v19.95h-19.95zM419.05 319.27h19.95v19.95h-19.95zM0.00 339.23h19.95v19.95h-19.95zM39.91 339.23h19.95v19.95h-19.95zM79.82 339.23h19.95v19.95h-19.95zM119.73 339.23h19.95v19.95h-19.95zM159.64 339.23h19.95v19.95h-19.95zM199.55 339.23h19.95v19.95h-19.95zM239.45 339.23h19.95v19.95h-19.95zM279.36 339.23h19.95v19.95h-19.95zM319.27 339.23h19.95v19.95h-19.95zM359.18 339.23h19.95v19.95h-19.95zM399.09 339.23h19.95v19.95h-19.95zM19.95 359.18h19.95v19.95h-19.95zM59.86 359.18h19.95v19.95h-19.95zM99.77 359.18h19.95v19.95h-19.95zM139.68 359.18h19.95v19.95h-19.95zM179.59 359.18h19.95v19.95h-19.95zM219.50 359.18h19.95v19.95h-19.95zM259.41 359.18h19.95v19.95h-19.95zM299.32 359.18h19.95v19.95h-19.95zM339.23 359.18h19.95v19.95h-19.95zM379.14 359.18h19.95v19.95h-19.95zM419.05 359.18h19.95v19.95h-19.95zM0.00 379.14h19.95v19.95h-19.95zM39.91 379.14h19.95v19.95h-19.95zM79.82 379.14h19.95v19.95h-19.95zM119.73 379.14h19.95v19.95h-19.95zM159.64 379.14h19.95v19.95h-19.95zM199.55 379.14h19.95v19.95h-19.95zM239.45 379.14h19.95v19.95h-19.95zM279.36 379.14h19.95v19.95h-19.95zM319.27 379.14h19.95v19.95h-19.95zM359.18 379.14h19.95v19.95h-19.95zM399.09 379.14h19.95v19.95h-19.95zM19.95 399.09h19.95v19.95h-19.95zM59.86 399.09h19.95v19.95h-19.95zM99.77 399.09h19.95v19.95h-19.95zM139.68 399.09h19.95v19.95h-19.95zM179.59 399.09h19.95v19.95h-19.95zM219.50 399.09h19.95v19.95h-19.95zM259.41 399.09h19.95v19.95h-19.95zM299.32 399.09h19.95v19.95h-19.95zM339.23 399.09h19.95v19.95h-19.95zM379.14 399.09h19.95v19.95h-19.95zM419.05 399.09h19.95v19.95h-19.95zM0.00 419.05h19.95v19.95h-19.95zM39.91 419.05h19.95v19.95h-19.95zM79.82 419.05h19.95v19.95h-19.95zM119.73 419.05h19.95v19.95h-19.95zM159.64 419.05h19.95v19.95h-19.95zM199.55 419.05h19.95v19.95h-19.95zM239.45 419.05h19.95v19.95h-19.95zM279.36 419.05h19.95v19.95h-19.95zM319.27 419.05h19.95v19.95h-19.95zM359.18 419.05h19.95v19.95h-19.95zM399.09 419.05h19.95v19.95h-19.95zM19.95 439.00h19.95v19.95h-19.95zM59.86 439.00h19.95v19.95h-19.95zM99.77 439.00h19.95v19.95h-19.95zM139.68 439.00h19.95v19.95h-19.95zM179.59 439.00h19.95v19.95h-19.95zM219.50 439.00h19.95v19.95h-19.95zM259.41 439.00h19.95v19.95h-19.95zM299.32 439.00h19.95v19.95h-19.95zM339.23 439.00h19.95v19.95h-19.95zM379.14 439.00h19.95v19.95h-19.95zM419.05 439.00h19.95v19.95h-19.95zM0.00 458.95h19.95v19.95h-19.95zM39.91 458.95h19.95v19.95h-19.95zM79.82 458.95h19.95v19.95h-19.95zM119.73 458.95h19.95v19.95h-19.95zM159.64 458.95h19.95v19.95h-19.95zM199.55 458.95h19.95v19.95h-19.95zM239.45 458.95h19.95v19.95h-19.95zM279.36 458.95h19.95v19.95h-19.95zM319.27 458.95h19.95v19.95h-19.95zM359.18 458.95h19.95v19.95h-19.95zM399.09 458.95h19.95v19.95h-19.95zM19.95 478.91h19.95v19.95h-19.95zM59.86 478.91h19.95v19.95h-19.95zM99.77 478.91h19.95v19.95h-19.95zM139.68 478.91h19.95v19.95h-19.95zM179.59 478.91h19.95v19.95h-19.95zM219.50 478.91h19.95v19.95h-19.95zM259.41 478.91h19.95v19.95h-19.95zM299.32 478.91h19.95v19.95h-19.95zM339.23 478.91h19.95v19.95h-19.95zM379.14 478.91h19.95v19.95h-19.95zM419.05 478.91h19.95v19.95h-19.95zM0.00 498.86h19.95v19.95h-19.95zM39.91 498.86h19.95v19.95h-19.95zM79.82 498.86h19.95v19.95h-19.95zM119.73 498.86h19.95v19.95h-19.95zM159.64 498.86h19.95v19.95h-19.95zM199.55 498.86h19.95v19.95h-19.95zM239.45 498.86h19.95v19.95h-19.95zM279.36 498.86h19.95v19.95h-19.95zM319.27 498.86h19.95v19.95h-19.95zM359.18 498.86h19.95v19.95h-19.95zM399.09 498.86h19.95v19.95h-19.95zM19.95 518.82h19.95v19.95h-19.95zM59.86 518.82h19.95v19.95h-19.95zM99.77 518.82h19.95v19.95h-19.95zM139.68 518.82h19.95v19.95h-19.95zM179.59 518.82h19.95v19.95h-19.95zM219.50 518.82h19.95v19.95h-19.95zM259.41 518.82h19.95v19.95h-19.95zM299.32 518.82h19.95v19.95h-19.95zM339.23 518.82h19.95v19.95h-19.95zM379.14 518.82h19.95v19.95h-19.95zM419.05 518.82h19.95v19.95h-19.95zM0.00 538.77h19.95v19.95h-19.95zM39.91 538.77h19.95v19.95h-19.95zM79.82 538.77h19.95v19.95h-19.95zM119.73 538.77h19.95v19.95h-19.95zM159.64 538.77h19.95v19.95h-19.95zM199.55 538.77h19.95v19.95h-19.95zM239.45 538.77h19.95v19.95h-19.95zM279.36 538.77h19.95v19.95h-19.95zM319.27 538.77h19.95v19.95h-19.95zM359.18 538.77h19.95v19.95h-19.95zM399.09 538.77h19.95v19.95h-19.95zM19.95 558.73h19.95v19.95h-19.95zM59.86 558.73h19.95v19.95h-19.95zM99.77 558.73h19.95v19.95h-19.95zM139.68 558.73h19.95v19.95h-19.95zM179.59 558.73h19.95v19.95h-19.95zM219.50 558.73h19.95v19.95h-19.95zM259.41 558.73h19.95v19.95h-19.95zM299.32 558.73h19.95v19.95h-19.95zM339.23 558.73h19.95v19.95h-19.95zM379.14 558.73h19.95v19.95h-19.95zM419.05 558.73h19.95v19.95h-19.95zM0.00 578.68h19.95v19.95h-19.95zM39.91 578.68h19.95v19.95h-19.95zM79.82 578.68h19.95v19.95h-19.95zM119.73 578.68h19.95v19.95h-19.95zM159.64 578.68h19.95v19.95h-19.95zM199.55 578.68h19.95v19.95h-19.95zM239.45 578.68h19.95v19.95h-19.95zM279.36 578.68h19.95v19.95h-19.95zM319.27 578.68h19.95v19.95h-19.95zM359.18 578.68h19.95v19.95h-19.95zM399.09 578.68h19.95v19.95h-19.95zM19.95 598.64h19.95v19.95h-19.95zM59.86 598.64h19.95v19.95h-19.95zM99.77 598.64h19.95v19.95h-19.95zM139.68 598.64h19.95v19.95h-19.95zM179.59 598.64h19.95v19.95h-19.95zM219.50 598.64h19.95v19.95h-19.95zM259.41 598.64h19.95v19.95h-19.95zM299.32 598.64h19.95v19.95h-19.95zM339.23 598.64h19.95v19.95h-19.95zM379.14 598.64h19.95v19.95h-19.95zM419.05 598.64h19.95v19.95h-19.95zM0.00 618.59h19.95v19.95h-19.95zM39.91 618.59h19.95v19.95h-19.95zM79.82 618.59h19.95v19.95h-19.95zM119.73 618.59h19.95v19.95h-19.95zM159.64 618.59h19.95v19.95h-19.95zM199.55 618.59h19.95v19.95h-19.95zM239.45 618.59h19.95v19.95h-19.95zM279.36 618.59h19.95v19.95h-19.95zM319.27 618.59h19.95v19.95h-19.95zM359.18 618.59h19.95v19.95h-19.95zM399.09 618.59h19.95v19.95h-19.95z"/></svg>
<div class="t" style="left:1047.23px;top:698.34px;font-family:'Liberation Sans';font-size:68.00px;color:#fafafa;transform:scaleX(0.9902);transform-origin:0 0;">Hello from</div>
<div class="t" style="left:1027.97px;top:781.54px;font-family:'Liberation Sans';font-size:68.00px;color:#fafafa;transform:scaleX(0.9827);transform-origin:0 0;">datasources</div>
<div class="t" style="left:1777.06px;top:103.76px;font-family:'Liberation Sans';font-size:15.17px;color:#3c4245;transform:scaleX(0.9882);transform-origin:0 0;">Components</div>
<div class="card" style="top:150.3px;height:96.3px"></div>
<div class="card" style="top:260.0px;height:96.5px"></div>
<div class="card" style="top:369.1px;height:96.5px"></div>
<div class="card" style="top:478.9px;height:96.6px"></div>
<div class="card" style="top:588.0px;height:96.6px"></div>
<div class="card" style="top:698.2px;height:96.3px"></div>
<div class="card" style="top:807.4px;height:110.7px"></div>
<div class="card" style="top:932.1px;height:96.2px"></div>
<div class="card" style="top:1041.1px;height:96.3px"></div>
<div class="card" style="top:1151.2px;height:111.2px"></div>
<div class="card" style="top:1275.3px;height:100.0px"></div>
<div class="t" style="left:1804.02px;top:219.13px;font-family:'Liberation Sans';font-size:15.20px;color:#545b5e;transform:scaleX(0.9300);transform-origin:0 0;">Container</div>
<div class="t" style="left:1814.19px;top:327.93px;font-family:'Liberation Sans';font-size:15.20px;color:#545b5e;transform:scaleX(0.9300);transform-origin:0 0;">Frame</div>
<div class="t" style="left:1814.95px;top:438.23px;font-family:'Liberation Sans';font-size:15.20px;color:#545b5e;transform:scaleX(0.9300);transform-origin:0 0;">Image</div>
<div class="t" style="left:1799.72px;top:547.13px;font-family:'Liberation Sans';font-size:15.20px;color:#545b5e;transform:scaleX(0.9300);transform-origin:0 0;">Scroll View</div>
<div class="t" style="left:1802.97px;top:656.73px;font-family:'Liberation Sans';font-size:15.20px;color:#545b5e;transform:scaleX(0.9300);transform-origin:0 0;">Sequence</div>
<div class="t" style="left:1821.86px;top:765.83px;font-family:'Liberation Sans';font-size:15.20px;color:#545b5e;transform:scaleX(0.9300);transform-origin:0 0;">Text</div>
<div class="t" style="left:1816.34px;top:875.83px;font-family:'Liberation Sans';font-size:15.20px;color:#545b5e;transform:scaleX(0.9300);transform-origin:0 0;">Touch</div>
<div class="t" style="left:1807.97px;top:890.63px;font-family:'Liberation Sans';font-size:15.20px;color:#545b5e;transform:scaleX(0.9300);transform-origin:0 0;">Wrapper</div>
<div class="t" style="left:1817.21px;top:999.93px;font-family:'Liberation Sans';font-size:15.20px;color:#545b5e;transform:scaleX(0.9300);transform-origin:0 0;">Video</div>
<div class="t" style="left:1815.59px;top:1109.53px;font-family:'Liberation Sans';font-size:15.20px;color:#545b5e;transform:scaleX(0.9300);transform-origin:0 0;">Pager</div>
<div class="t" style="left:1793.44px;top:1218.83px;font-family:'Liberation Sans';font-size:15.20px;color:#545b5e;transform:scaleX(0.9300);transform-origin:0 0;">GridSequenc</div>
<div class="t" style="left:1831.05px;top:1233.53px;font-family:'Liberation Sans';font-size:15.20px;color:#545b5e;transform:scaleX(0.9300);transform-origin:0 0;">e</div>
<svg style="left:1784px;top:140px" width="102" height="1152" viewBox="1784 140 102 1152">
<rect x="1816.5" y="165.5" width="37.4" height="37" fill="none" stroke="#000" stroke-width="3" stroke-dasharray="3.2 2.6"/>
<rect x="1816.5" y="274.5" width="37" height="36.8" fill="none" stroke="#000" stroke-width="3"/>
<path d="M1834.2 389 L1851 410 H1817.5 Z" fill="none" stroke="#000" stroke-width="2.6" stroke-linejoin="miter"/>
<circle cx="1849.6" cy="394.3" r="3.4" fill="none" stroke="#000" stroke-width="2.2"/>
<rect x="1816.5" y="493.4" width="37" height="37" fill="none" stroke="#000" stroke-width="3"/>
<line x1="1848" y1="500" x2="1848" y2="524.6" stroke="#000" stroke-width="2.2" stroke-linecap="round"/>
<rect x="1819" y="603.3" width="32" height="6.5" fill="none" stroke="#000" stroke-width="2"/>
<rect x="1819" y="615.7" width="32" height="6.5" fill="none" stroke="#000" stroke-width="2"/>
<rect x="1819" y="628.1" width="32" height="6.5" fill="none" stroke="#000" stroke-width="2"/>
<rect x="1816.2" y="826.2" width="30" height="29.2" fill="none" stroke="#000" stroke-width="2.4"/>
<rect x="1822.2" y="963.6" width="28.8" height="20.3" fill="none" stroke="#000" stroke-width="2.4"/>
<path d="M1819.6 955.8 L1845.6 946.4 L1847.9 952.6 L1822.4 962.2 Z" fill="none" stroke="#000" stroke-width="2.3" stroke-linejoin="miter"/>
<rect x="1815.9" y="1058.4" width="8.8" height="33.4" fill="none" stroke="#000" stroke-width="2.6"/>
<rect x="1830.6" y="1058.4" width="8.8" height="33.4" fill="none" stroke="#000" stroke-width="2.6"/>
<rect x="1845.3" y="1058.4" width="8.8" height="33.4" fill="none" stroke="#000" stroke-width="2.6"/>

<rect x="1816.3" y="1165.4" width="17.6" height="10.6" fill="none" stroke="#000" stroke-width="2.6"/>
<rect x="1836.4" y="1165.4" width="17.6" height="10.6" fill="none" stroke="#000" stroke-width="2.6"/>
<rect x="1816.3" y="1179.2" width="17.6" height="10.6" fill="none" stroke="#000" stroke-width="2.6"/>
<rect x="1836.4" y="1179.2" width="17.6" height="10.6" fill="none" stroke="#000" stroke-width="2.6"/>
<rect x="1816.3" y="1193.0" width="17.6" height="10.6" fill="none" stroke="#000" stroke-width="2.6"/>
<rect x="1836.4" y="1193.0" width="17.6" height="10.6" fill="none" stroke="#000" stroke-width="2.6"/>
<line x1="1835" y1="1164" x2="1835" y2="1204" stroke="#888" stroke-width="1"/>
<circle cx="1847.1" cy="840.8" r="7.6" fill="#8a8a8a"/>
<line x1="1843.05" y1="833.90" x2="1851.15" y2="833.90" stroke="#000" stroke-width="1.1"/>
<line x1="1840.55" y1="836.20" x2="1853.65" y2="836.20" stroke="#000" stroke-width="1.1"/>
<line x1="1839.44" y1="838.50" x2="1854.76" y2="838.50" stroke="#000" stroke-width="1.1"/>
<line x1="1839.10" y1="840.80" x2="1855.10" y2="840.80" stroke="#000" stroke-width="1.1"/>
<line x1="1839.44" y1="843.10" x2="1854.76" y2="843.10" stroke="#000" stroke-width="1.1"/>
<line x1="1840.55" y1="845.40" x2="1853.65" y2="845.40" stroke="#000" stroke-width="1.1"/>
<line x1="1843.05" y1="847.70" x2="1851.15" y2="847.70" stroke="#000" stroke-width="1.1"/>
</svg>
<div class="t" style="left:1817.23px;top:699.70px;font-family:'Liberation Serif';font-size:62.44px;color:#000;transform:scaleX(0.9472);transform-origin:0 0;-webkit-text-stroke:0.6px #000;">T</div>
</body></html>
